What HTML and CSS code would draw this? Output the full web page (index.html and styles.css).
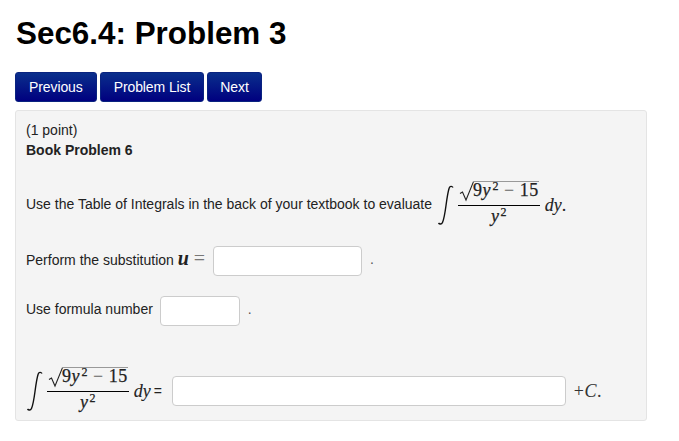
FILE: index.html
```html
<!DOCTYPE html>
<html lang="en">
<head>
    <meta charset="UTF-8">
    <meta name="viewport" content="width=device-width, initial-scale=1.0">
    <title>Sec6.4: Problem 3</title>
    <link rel="stylesheet" href="styles.css">
</head>
<body>

    <h1>Sec6.4: Problem 3</h1>

    <div class="nav">
        <a class="nav-btn" href="#">Previous</a>
        <a class="nav-btn" href="#">Problem List</a>
        <a class="nav-btn nav-next" href="#">Next</a>
    </div>

    <div class="problem">
        <p class="points">(1 point)</p>
        <p class="book">Book Problem 6</p>

        <div class="row row-evaluate">
            <span class="label">Use the Table of Integrals in the back of your textbook to evaluate</span>
            <span class="math">
                <svg class="integral" width="17" height="41" viewBox="0 0 17 41"><path d="M16 2.500C15 .8 13 1 12.200 3 11 6.500 10 13 9 20.500 8 28 7 34 5.500 37.500 4.600 39.500 2.500 39.500 1.500 38" fill="none" stroke="#111" stroke-width="1.400"/></svg>
                <span class="frac">
                    <span class="numer">
                        <svg class="radical" width="15" height="21" viewBox="0 0 15 21"><path d="M1 12.500l2.500-1.500 3.500 8L14.500 .6" fill="none" stroke="#222" stroke-width="1.100"/></svg>
                        <span class="radicand">9<i>y</i><sup>2</sup> <span class="minus">&minus;</span> 15</span>
                    </span>
                    <span class="denom"><i>y</i><sup>2</sup></span>
                </span>
                <span class="dy"><i>dy</i>.</span>
            </span>
        </div>

        <div class="row row-sub">
            <span class="label">Perform the substitution <span class="var">u</span> <span class="eq">=</span></span>
            <input class="answer answer-sub" type="text">
            <span class="dot">.</span>
        </div>

        <div class="row row-formula">
            <span class="label">Use formula number</span>
            <input class="answer answer-formula" type="text">
            <span class="dot">.</span>
        </div>

        <div class="row row-result">
            <span class="math">
                <svg class="integral" width="17" height="41" viewBox="0 0 17 41"><path d="M16 2.500C15 .8 13 1 12.200 3 11 6.500 10 13 9 20.500 8 28 7 34 5.500 37.500 4.600 39.500 2.500 39.500 1.500 38" fill="none" stroke="#111" stroke-width="1.400"/></svg>
                <span class="frac">
                    <span class="numer">
                        <svg class="radical" width="15" height="21" viewBox="0 0 15 21"><path d="M1 12.500l2.500-1.500 3.500 8L14.500 .6" fill="none" stroke="#222" stroke-width="1.100"/></svg>
                        <span class="radicand">9<i>y</i><sup>2</sup> <span class="minus">&minus;</span> 15</span>
                    </span>
                    <span class="denom"><i>y</i><sup>2</sup></span>
                </span>
                <span class="dy"><i>dy</i></span>
            </span>
            <span class="equals">=</span>
            <input class="answer answer-result" type="text">
            <span class="plus-c">+<i>C</i>.</span>
        </div>
    </div>

</body>
</html>
```

FILE: styles.css
```css
body {
    font-family: "Liberation Sans", Arial, sans-serif;
    font-size: 14px;
    line-height: 20px;
    color: #222;
    background-color: #fff;
    margin: 0;
    padding: 0 32px 0 15px;
}

h1 {
    font-size: 31.4px;
    line-height: 36px;
    font-weight: bold;
    color: #000;
    margin: 0;
    padding: 16px 0 0 1px;
}

.nav {
    display: flex;
    gap: 3px;
    margin-top: 20px;
}

.nav-btn {
    height: 30px;
    line-height: 29px;
    padding: 0 13px;
    color: #fff;
    text-decoration: none;
    background: linear-gradient(#0a2f8c, #00007f);
    border: 1px solid #0a2380;
    border-radius: 3px;
    box-sizing: border-box;
    letter-spacing: -0.1px;
}

.nav-next {
    padding: 0 12px;
}

.problem {
    margin-top: 8px;
    height: 311px;
    box-sizing: border-box;
    padding: 9px 10px 0 10px;
    background-color: #f4f4f4;
    border: 1px solid #e4e4e4;
    border-radius: 3px;
}

.points {
    margin: 0;
}

.book {
    margin: 0;
    font-weight: bold;
}

.row {
    display: flex;
    align-items: center;
}

.row-evaluate {
    margin-top: 15px;
    height: 60px;
}

.row-evaluate .label {
    margin-bottom: 2px;
}

.row-sub {
    margin-top: 11px;
    height: 30px;
}

.row-sub .label,
.row-formula .label {
    margin-bottom: 4px;
}

.row-formula {
    margin-top: 20px;
    height: 30px;
}

.row-result {
    margin-top: 35px;
    height: 60px;
}

.math {
    display: inline-flex;
    align-items: center;
    font-family: "Liberation Serif", "Times New Roman", serif;
    font-size: 18px;
    color: #222;
    -webkit-text-stroke: 0.25px #222;
}

.row-evaluate .math {
    margin-left: 5px;
}

.integral {
    display: block;
    margin-right: 4px;
}

.frac {
    display: inline-flex;
    flex-direction: column;
    align-items: center;
}

.numer {
    display: flex;
    align-items: flex-end;
    height: 24px;
    box-sizing: border-box;
    padding: 0 1px 3px 1px;
    border-bottom: 1px solid #000;
}

.radical {
    display: block;
    margin-right: -1px;
}

.radicand {
    height: 20px;
    line-height: 16px;
    border-top: 1px solid #999;
    white-space: pre;
    letter-spacing: 0.5px;
}

.minus {
    color: #666;
    -webkit-text-stroke: 0;
}

.denom {
    line-height: 20px;
    height: 23px;
}

sup {
    font-size: 12px;
    line-height: 0;
    vertical-align: 6px;
    margin-left: 1.5px;
}

.dy {
    margin-left: 5px;
    -webkit-text-stroke: 0.1px #222;
}

.var {
    font-family: "Liberation Serif", "Times New Roman", serif;
    font-style: italic;
    font-weight: bold;
    font-size: 20px;
    letter-spacing: 1px;
}

.eq {
    color: #777;
    font-family: "Liberation Serif", "Times New Roman", serif;
    font-size: 20px;
}

.answer {
    height: 30px;
    box-sizing: border-box;
    padding: 4px 6px;
    background-color: #fff;
    border: 1px solid #ccc;
    border-radius: 4px;
}

.answer-sub {
    width: 149px;
    margin-left: 8px;
}

.answer-formula {
    width: 80px;
    margin-left: 7px;
}

.answer-result {
    width: 394px;
    margin-left: 10px;
}

.dot {
    margin: 0 0 5px 8px;
    color: #555;
}

.equals {
    margin-left: 3px;
}

.plus-c {
    margin-left: 8px;
    font-family: "Liberation Serif", "Times New Roman", serif;
    font-size: 18px;
    letter-spacing: 0.5px;
    color: #333;
}
```
